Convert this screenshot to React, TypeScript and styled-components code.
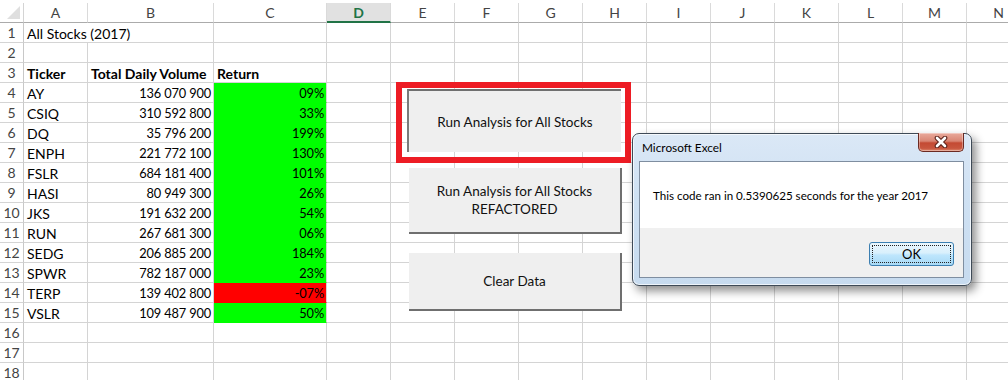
import React from "react";
import styled, { createGlobalStyle, css } from "styled-components";

const GlobalStyle = createGlobalStyle`
  html, body { margin: 0; padding: 0; background: #fff; overflow: hidden; }
  body { width: 1008px; height: 380px; font-family: Lato, "Liberation Sans", sans-serif; }
  * { box-sizing: border-box; }
`;

const Page = styled.div`
  position: relative;
  width: 1008px;
  height: 380px;
  overflow: hidden;
  background: #fff;
`;

const Sheet = styled.div`
  display: grid;
  grid-template-columns: 24px 64px 126px 113px repeat(11, 64px);
  grid-auto-rows: 20px;
  padding-top: 3px;
  font-family: Lato, "Liberation Sans", sans-serif;
`;

const Corner = styled.div`
  position: relative;
  background: #fff;
  border-right: 1px solid #d4d4d4;
  border-bottom: 1px solid #ababab;
  &::after {
    content: "";
    position: absolute;
    right: 3px;
    bottom: 3px;
    width: 0;
    height: 0;
    border-left: 13px solid transparent;
    border-bottom: 13px solid #dfdfdf;
  }
`;

const ColHeader = styled.div<{ $selected?: boolean }>`
  display: flex;
  align-items: center;
  justify-content: center;
  font-size: 14px;
  color: #444;
  background: #fff;
  border-right: 1px solid #dadada;
  border-bottom: 1px solid #ababab;
  ${(p) =>
    p.$selected &&
    css`
      background: #e1e1e1;
      color: #217346;
      font-weight: 700;
      border-bottom: 2px solid #217346;
    `}
`;

const RowHeader = styled.div`
  display: flex;
  align-items: center;
  justify-content: center;
  font-size: 14px;
  color: #444;
  background: #fff;
  border-right: 1px solid #c8c8c8;
  border-bottom: 1px solid #d4d4d4;
`;

const Cell = styled.div<{
  $align?: "left" | "right";
  $bold?: boolean;
  $fill?: string;
  $span?: number;
}>`
  display: flex;
  align-items: center;
  justify-content: ${(p) => (p.$align === "right" ? "flex-end" : "flex-start")};
  padding: 1px 3px 0 3px;
  font-size: 14px;
  font-weight: ${(p) => (p.$bold ? 700 : 400)};
  color: #000;
  white-space: nowrap;
  border-right: 1px solid #d4d4d4;
  border-bottom: 1px solid ${(p) => p.$fill || "#d4d4d4"};
  background: ${(p) => p.$fill || "#fff"};
  ${(p) => p.$span && css`grid-column: span ${p.$span};`}
  ${(p) =>
    p.$align === "right" &&
    css`
      padding-right: 2px;
      font-size: 12.8px;
      letter-spacing: -0.15px;
    `}
`;

const HighlightFrame = styled.div`
  position: absolute;
  left: 396px;
  top: 82px;
  width: 235px;
  height: 81px;
  border: 6px solid #ed1c24;
`;

const MacroButton = styled.div<{ $x: number; $y: number; $w: number; $h: number; $pressed?: boolean }>`
  position: absolute;
  left: ${(p) => p.$x}px;
  top: ${(p) => p.$y}px;
  width: ${(p) => p.$w}px;
  height: ${(p) => p.$h}px;
  background: #efefef;
  display: flex;
  flex-direction: column;
  align-items: center;
  justify-content: center;
  text-align: center;
  font-family: Lato, "Liberation Sans", sans-serif;
  font-size: 13.5px;
  line-height: 18px;
  color: #111;
  ${(p) =>
    p.$pressed
      ? css`
          border-top: 2px solid #6f6f6f;
          border-left: 2px solid #7a7a7a;
        `
      : css`
          border-right: 2px solid #6f6f6f;
          border-bottom: 2px solid #6f6f6f;
        `}
`;

const Dialog = styled.div`
  position: absolute;
  left: 632px;
  top: 133px;
  width: 340px;
  height: 153px;
  border: 1px solid #3e4a57;
  border-radius: 7px;
  background: linear-gradient(180deg, #dbe8f6 0%, #cfe1f3 40%, #c7dbef 100%);
  box-shadow: 4px 5px 10px rgba(0, 0, 0, 0.45), inset 0 0 0 1px rgba(255, 255, 255, 0.7);
  display: flex;
  flex-direction: column;
  padding: 0 7px 7px 6px;
  font-family: Lato, "Noto Sans", sans-serif;
`;

const TitleBar = styled.div`
  height: 27px;
  display: flex;
  align-items: center;
  justify-content: space-between;
  padding-left: 3px;
  font-size: 11.8px;
  color: #000;
`;

const CloseButton = styled.div`
  align-self: flex-start;
  margin-top: -1px;
  width: 46px;
  height: 19px;
  border: 1px solid #6b2a22;
  border-top: none;
  border-radius: 0 0 5px 5px;
  background: linear-gradient(180deg, #e9a99b 0%, #d98573 45%, #c44a33 55%, #c8563e 85%, #e08a70 100%);
  display: flex;
  align-items: center;
  justify-content: center;
  box-shadow: inset 0 0 0 1px rgba(255, 255, 255, 0.35);
`;

const Content = styled.div`
  flex: 1;
  display: flex;
  flex-direction: column;
  border: 1px solid #7f8ea0;
  background: #f0f0f0;
`;

const MessageArea = styled.div`
  height: 66px;
  background: #fff;
  padding: 27px 0 0 13px;
  font-size: 11.6px;
  color: #000;
`;

const ButtonArea = styled.div`
  flex: 1;
  display: flex;
  justify-content: flex-end;
  align-items: flex-start;
  padding: 14px 9px 0 0;
`;

const OkButton = styled.div`
  width: 85px;
  height: 24px;
  border: 1px solid #3c7fb1;
  border-radius: 3px;
  background: linear-gradient(180deg, #eaf6fd 0%, #d9f0fc 45%, #bee6fd 55%, #a7d9f5 100%);
  padding: 2px;
  display: flex;
`;

const FocusRect = styled.div`
  flex: 1;
  border: 1px dotted #222;
  display: flex;
  align-items: center;
  justify-content: center;
  font-size: 13px;
  color: #000;
`;

const columns = ["A", "B", "C", "D", "E", "F", "G", "H", "I", "J", "K", "L", "M", "N"];

const stocks: [string, string, string][] = [
  ["AY", "136 070 900", "09%"],
  ["CSIQ", "310 592 800", "33%"],
  ["DQ", "35 796 200", "199%"],
  ["ENPH", "221 772 100", "130%"],
  ["FSLR", "684 181 400", "101%"],
  ["HASI", "80 949 300", "26%"],
  ["JKS", "191 632 200", "54%"],
  ["RUN", "267 681 300", "06%"],
  ["SEDG", "206 885 200", "184%"],
  ["SPWR", "782 187 000", "23%"],
  ["TERP", "139 402 800", "-07%"],
  ["VSLR", "109 487 900", "50%"],
];

type CellDef = { text?: string; align?: "left" | "right"; bold?: boolean; fill?: string; span?: number };

function buildRows(): CellDef[][] {
  const rows: CellDef[][] = [];
  const empty = (): CellDef[] => columns.map(() => ({}));
  const r1 = empty();
  r1.splice(0, 2, { text: "All Stocks (2017)", span: 2 });
  rows.push(r1);
  rows.push(empty());
  const r3 = empty();
  r3[0] = { text: "Ticker", bold: true };
  r3[1] = { text: "Total Daily Volume", bold: true };
  r3[2] = { text: "Return", bold: true };
  rows.push(r3);
  stocks.forEach(([t, v, r]) => {
    const row = empty();
    row[0] = { text: t };
    row[1] = { text: v, align: "right" };
    row[2] = { text: r, align: "right", fill: r.startsWith("-") ? "#ff0000" : "#00ff00" };
    rows.push(row);
  });
  rows.push(empty());
  rows.push(empty());
  rows.push(empty());
  return rows;
}

export default function App() {
  const rows = buildRows();
  return (
    <Page>
      <GlobalStyle />
      <Sheet>
        <Corner />
        {columns.map((c) => (
          <ColHeader key={c} $selected={c === "D"}>
            {c}
          </ColHeader>
        ))}
        {rows.map((row, i) => (
          <React.Fragment key={i}>
            <RowHeader>{i + 1}</RowHeader>
            {row.map((cell, j) => (
              <Cell key={j} $align={cell.align} $bold={cell.bold} $fill={cell.fill} $span={cell.span}>
                {cell.text}
              </Cell>
            ))}
          </React.Fragment>
        ))}
      </Sheet>

      <MacroButton $x={407} $y={89} $w={214} $h={63} $pressed>
        Run Analysis for All Stocks
      </MacroButton>
      <HighlightFrame />
      <MacroButton $x={409} $y={168} $w={213} $h={66}>
        <span>Run Analysis for All Stocks</span>
        <span>REFACTORED</span>
      </MacroButton>
      <MacroButton $x={409} $y={253} $w={213} $h={58}>
        Clear Data
      </MacroButton>

      <Dialog>
        <TitleBar>
          <span>Microsoft Excel</span>
          <CloseButton>
            <svg width="16" height="12" viewBox="0 0 16 12">
              <path d="M4 2 L12 10 M12 2 L4 10" stroke="#5a2119" strokeWidth="4.6" strokeLinecap="round" />
              <path d="M4 2 L12 10 M12 2 L4 10" stroke="#ffffff" strokeWidth="2.6" strokeLinecap="round" />
            </svg>
          </CloseButton>
        </TitleBar>
        <Content>
          <MessageArea>This code ran in 0.5390625 seconds for the year 2017</MessageArea>
          <ButtonArea>
            <OkButton>
              <FocusRect>OK</FocusRect>
            </OkButton>
          </ButtonArea>
        </Content>
      </Dialog>
    </Page>
  );
}
